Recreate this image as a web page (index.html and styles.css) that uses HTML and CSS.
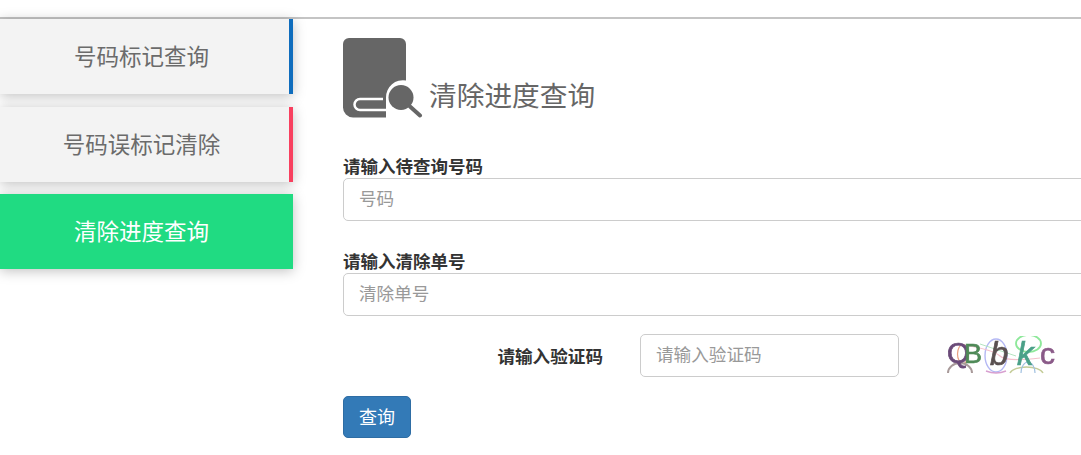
FILE: index.html
```html
<!DOCTYPE html>
<html lang="zh-CN">
<head>
  <meta charset="UTF-8">
  <title>清除进度查询</title>
  <link rel="stylesheet" href="styles.css">
</head>
<body>
  <div class="top-line"></div>
  <div class="page">
    <!-- side menu -->
    <div class="side-menu">
      <a class="menu-item menu-blue">号码标记查询</a>
      <a class="menu-item menu-red">号码误标记清除</a>
      <a class="menu-item menu-active">清除进度查询</a>
    </div>

    <div class="content">
      <div class="title-row">
        <svg class="title-icon" width="80" height="80" viewBox="0 0 80 80">
          <path fill="#666" d="M6 0H57a6 6 0 0 1 6 6V42.500a17 17 0 0 0-20 17q0 4 0 8V79.500H10a10 10 0 0 1-10-10V6a6 6 0 0 1 6-6z"/>
          <path d="M40 61H17a5.500 5.500 0 0 0 0 11H43" fill="none" stroke="#fff" stroke-width="2.500"/>
          <circle cx="58" cy="59.500" r="12.500" fill="#666"/>
          <path d="M67 68.500l10 9" stroke="#666" stroke-width="4" stroke-linecap="round"/>
        </svg>
        <h1>清除进度查询</h1>
      </div>

      <div class="form-group">
        <label>请输入待查询号码</label>
        <input class="form-control" type="text" placeholder="号码">
      </div>
      <div class="form-group">
        <label>请输入清除单号</label>
        <input class="form-control" type="text" placeholder="清除单号">
      </div>

      <div class="captcha-row">
        <label>请输入验证码</label>
        <input class="form-control captcha-input" type="text" placeholder="请输入验证码">
        <svg class="captcha" width="112" height="40" viewBox="0 0 112 40">
          <ellipse cx="19" cy="18" rx="5.500" ry="9.500" fill="none" stroke="#e8a080" stroke-width="1.200"/>
          <ellipse cx="52" cy="19.500" rx="11" ry="16.500" fill="none" stroke="#b4b8f4" stroke-width="1.400"/>
          <ellipse cx="84.500" cy="7.500" rx="12.500" ry="8.500" fill="none" stroke="#8ee89a" stroke-width="1.800"/>
          <path d="M36 8L72 20" fill="none" stroke="#b4e4c0" stroke-width="1"/>
          <path d="M20 9Q50 14 56 20T96 22" fill="none" stroke="#f4c0cc" stroke-width="1.200"/>
          <path d="M4 37A12 10 0 0 1 28 37" fill="none" stroke="#a89a9a" stroke-width="2"/>
          <path d="M66 37A17 8 0 0 1 99 37" fill="none" stroke="#c4cc98" stroke-width="1.500"/>
          <path d="M77 37A7 11 0 0 1 91 37" fill="none" stroke="#a0c0e0" stroke-width="1.200"/>
          <path d="M42 35Q52 39 62 35" fill="none" stroke="#d8a0d0" stroke-width="1.500"/>
          <text x="3" y="27" class="cap-q">Q</text>
          <text x="20" y="27" class="cap-b">B</text>
          <text x="46" y="29" class="cap-s">b</text>
          <text x="73" y="29" class="cap-k">k</text>
          <text x="96" y="28" class="cap-c">c</text>
        </svg>
      </div>

      <button class="btn-primary">查询</button>
    </div>
  </div>
</body>
</html>
```

FILE: styles.css
```css
* {
  box-sizing: border-box;
}

body {
  margin: 0;
  overflow: hidden;
  background-color: white;
  font-family: "Liberation Sans", "Noto Sans CJK SC", sans-serif;
  font-size: 16px;
  color: #333;
}

.top-line {
  height: 19px;
  border-bottom: 2px solid #c4c4c4;
}

.page {
  display: flex;
}

.side-menu {
  width: 293px;
  flex-shrink: 0;
}

.menu-item {
  display: block;
  height: 75px;
  margin-bottom: 12.5px;
  padding-right: 10px;
  line-height: 77px;
  text-align: center;
  font-size: 22.5px;
  color: #6b6b6b;
  background-color: #f3f3f3;
  box-shadow: 0 2px 12px rgba(0, 0, 0, 0.25);
}

.menu-blue {
  padding-right: 6px;
  border-right: 4px solid #0f6dbd;
}

.menu-red {
  padding-right: 6px;
  border-right: 4px solid #f8405f;
}

.menu-active {
  color: white;
  background-color: #20db82;
}

.content {
  flex: 1;
  padding-left: 50px;
  min-width: 0;
}

.title-row {
  display: flex;
  align-items: flex-end;
  margin-top: 19px;
  margin-bottom: 36px;
}

.title-icon {
  display: block;
  flex-shrink: 0;
}

h1 {
  margin: 0 0 4px 6px;
  font-size: 27.7px;
  font-weight: normal;
  line-height: 34px;
  color: #666;
}

.form-group {
  margin-bottom: 28px;
}

.form-group label {
  display: block;
  height: 24px;
  line-height: 26px;
  font-size: 17.5px;
  font-weight: bold;
}

.form-control {
  display: block;
  width: 100%;
  height: 43px;
  padding: 6px 15px;
  font-family: inherit;
  font-size: 17.6px;
  color: #555;
  background-color: white;
  border: 1px solid #ccc;
  border-radius: 5px;
}

.form-control::placeholder {
  color: #999;
}

.form-group .form-control {
  width: calc(100% + 6px);
}

.captcha-row {
  display: flex;
  align-items: center;
  margin-top: -10px;
  margin-bottom: 19px;
}

.captcha-row label {
  width: 260px;
  text-align: right;
  font-size: 17.6px;
  font-weight: bold;
}

.captcha-input {
  width: 259px;
  margin-left: 37px;
}

.captcha {
  display: block;
  margin-left: 45px;
  flex-shrink: 0;
  filter: blur(0.4px);
}

.captcha text {
  font-family: "Liberation Sans", sans-serif;
  font-size: 29px;
  stroke-width: 0.7px;
}

.cap-q {
  fill: #6a4a78;
  stroke: #6a4a78;
}

.cap-b {
  fill: #4f8a58;
  stroke: #4f8a58;
}

.captcha .cap-b {
  font-size: 27px;
}

.captcha .cap-s {
  fill: #5a5050;
  stroke: #5a5050;
  font-style: italic;
  font-size: 33px;
}

.captcha .cap-k {
  fill: #4aa088;
  stroke: #4aa088;
  font-style: italic;
  font-size: 33px;
}

.captcha .cap-c {
  fill: #8a5a88;
  stroke: #8a5a88;
  font-size: 30px;
}

.btn-primary {
  display: block;
  width: 68px;
  height: 42px;
  padding: 0 0 3px;
  font-family: inherit;
  font-size: 18px;
  color: white;
  background-color: #337ab7;
  border: 1px solid #2e6da4;
  border-radius: 5px;
}
```
